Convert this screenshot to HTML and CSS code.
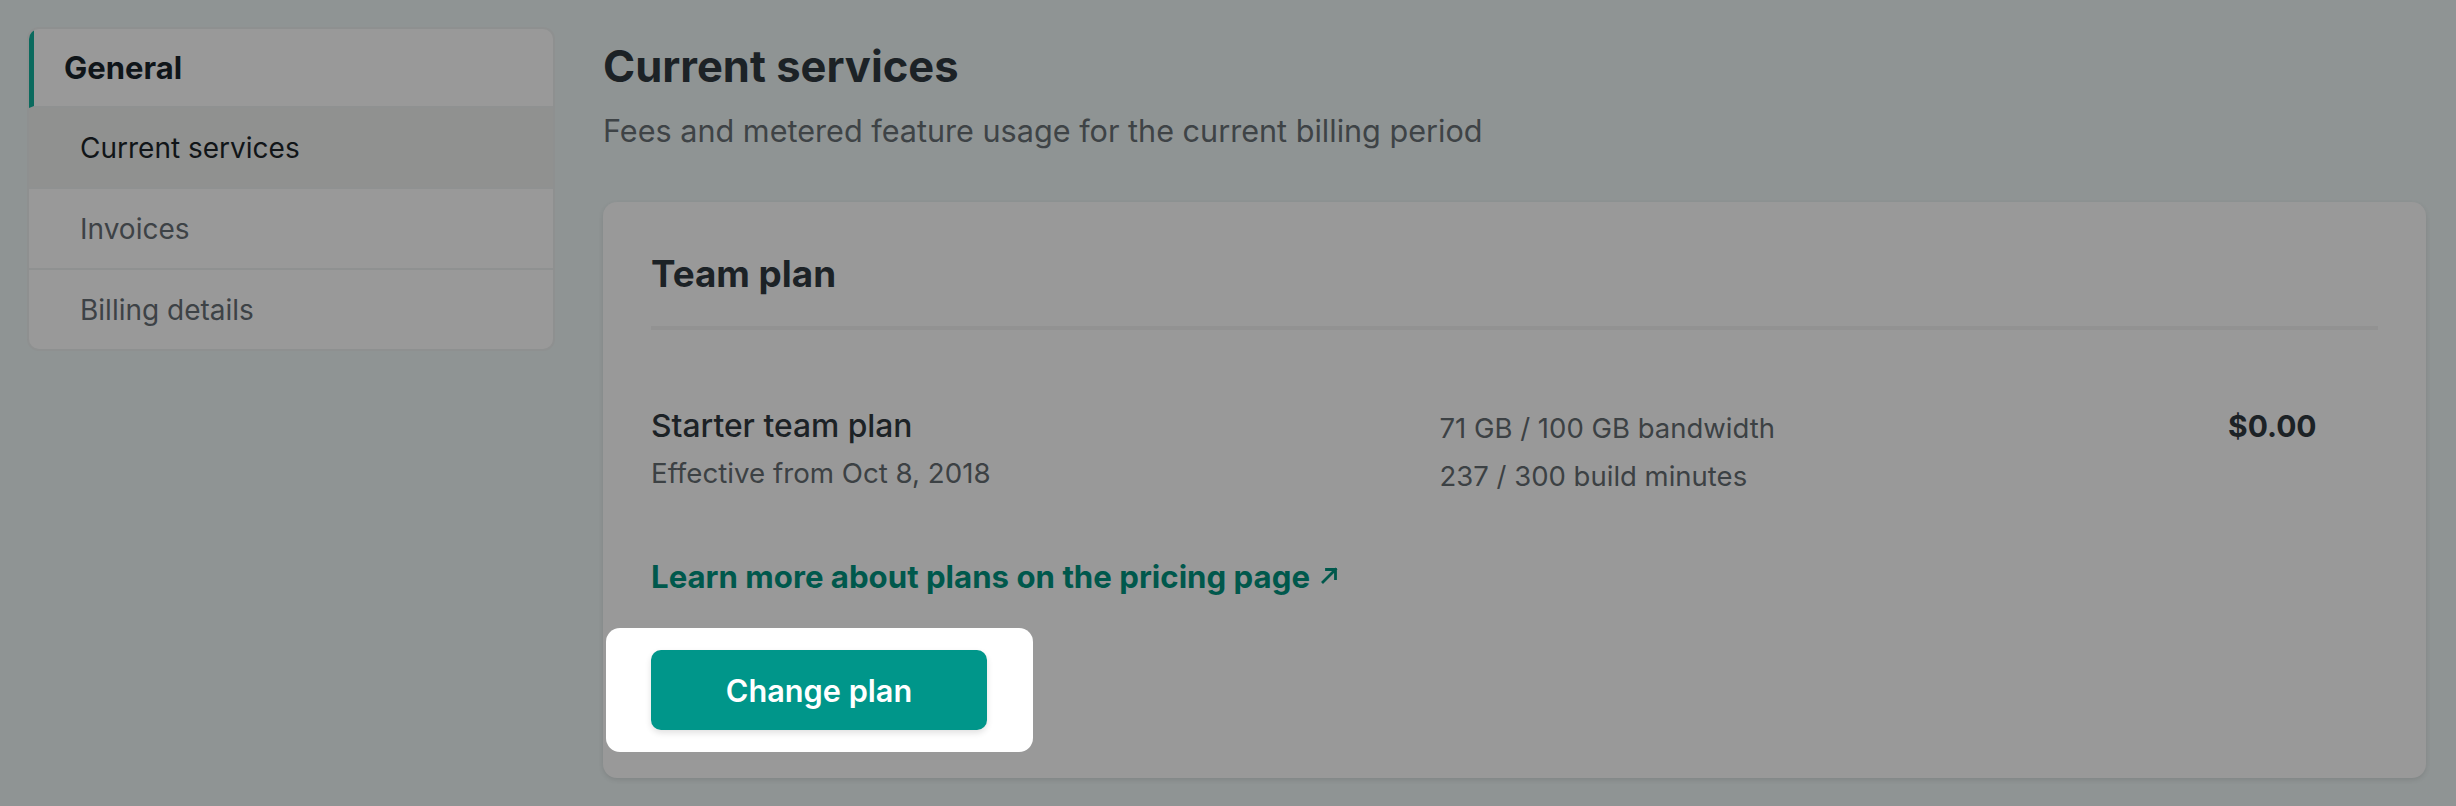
FILE: index.html
```html
<!DOCTYPE html>
<html lang="en">
<head>
<meta charset="utf-8">
<title>Current services</title>
<link rel="stylesheet" href="styles.css">
</head>
<body>
<div class="page">
  <nav class="sidebar">
    <div class="nav-head">General</div>
    <a class="nav-item active">Current services</a>
    <a class="nav-item">Invoices</a>
    <a class="nav-item last">Billing details</a>
  </nav>
  <main class="main">
    <h1 class="title">Current services</h1>
    <p class="subtitle">Fees and metered feature usage for the current billing period</p>
    <section class="card">
      <h2 class="card-title">Team plan</h2>
      <div class="divider"></div>
      <div class="plan-row">
        <div class="plan-info">
          <div class="plan-name">Starter team plan</div>
          <div class="plan-date">Effective from Oct 8, 2018</div>
        </div>
        <div class="plan-usage">
          <div>71 GB / 100 GB bandwidth</div>
          <div>237 / 300 build minutes</div>
        </div>
        <div class="plan-price">$0.00</div>
      </div>
      <a class="pricing-link">Learn more about plans on the pricing page<svg class="arrow" width="17" height="17" viewBox="0 0 17 17"><path d="M2 15 L14.5 2.5 M5.5 2.5 H14.5 V11.5" fill="none" stroke="currentColor" stroke-width="2.8" stroke-linecap="square"/></svg></a>
      <div class="highlight">
        <button class="btn">Change plan</button>
      </div>
    </section>
  </main>
</div>
</body>
</html>
```

FILE: styles.css
```css
* { box-sizing: border-box; }
html, body { margin: 0; padding: 0; }
body {
  background: #8f9494;
  font-family: Inter, "Noto Sans", "Liberation Sans", sans-serif;
  color: #1c2226;
  width: 2456px;
  height: 806px;
  overflow: hidden;
}
.page {
  display: flex;
  align-items: flex-start;
  padding: 27px 30px 0 27px;
  gap: 48px;
}
.sidebar {
  width: 528px;
  flex: 0 0 528px;
  background: #999999;
  border: 2px solid #8e9090;
  border-radius: 12px;
  overflow: hidden;
  display: flex;
  flex-direction: column;
}
.nav-head {
  height: 79px;
  display: flex;
  align-items: center;
  padding-left: 30px;
  border-left: 5px solid #0b6a5e;
  border-bottom: 2px solid #8f9191;
  font-size: 31px;
  font-weight: 700;
  color: #0f1519;
}
.nav-item {
  height: 81px;
  display: flex;
  align-items: center;
  padding-left: 51px;
  border-bottom: 2px solid #8f9191;
  font-size: 28px;
  color: #3d4246;
}
.nav-item.active {
  background: #909190;
  color: #111518;
}
.nav-item.last { border-bottom: 0; height: 79px; }
.main {
  flex: 1;
  min-width: 0;
}
.title {
  margin: 12px 0 0;
  font-size: 43.5px;
  line-height: 54px;
  font-weight: 700;
  color: #1c2226;
}
.subtitle {
  margin: 17px 0 0;
  font-size: 30.6px;
  line-height: 42px;
  color: #3e4346;
}
.card {
  margin-top: 50px;
  background: #999999;
  border-radius: 14px;
  padding: 49px 48px 48px 48px;
  box-shadow: 0 2px 5px rgba(0,0,0,0.10);
}
.card-title {
  margin: 0;
  font-size: 36.8px;
  line-height: 46px;
  font-weight: 700;
  color: #1c2226;
}
.divider {
  height: 4px;
  background: #929292;
  margin-top: 29px;
}
.plan-row {
  display: grid;
  grid-template-columns: 1fr 1fr 150px;
  column-gap: 2px;
  margin-top: 74px;
}
.plan-name {
  font-size: 31.8px;
  line-height: 44px;
  font-weight: 500;
  color: #1c2226;
}
.plan-date {
  margin-top: 4px;
  font-size: 27.7px;
  line-height: 42px;
  color: #3c4144;
}
.plan-usage {
  font-size: 27.5px;
  line-height: 48px;
  color: #3c4144;
}
.plan-price {
  font-size: 30px;
  line-height: 44px;
  font-weight: 700;
  color: #1c2226;
}
.pricing-link {
  display: inline-flex;
  align-items: center;
  margin-top: 56px;
  font-size: 31.2px;
  line-height: 42px;
  font-weight: 700;
  color: #00584c;
}
.arrow { margin-left: 11px; margin-top: -4px; }
.highlight {
  display: block;
  width: max-content;
  background: #ffffff;
  border-radius: 14px;
  padding: 22px 46px 22px 45px;
  margin: 30px 0 -22px -45px;
}
.btn {
  display: flex;
  align-items: center;
  justify-content: center;
  width: 336px;
  height: 80px;
  border: 0;
  border-radius: 10px;
  background: #00968a;
  color: #ffffff;
  font-family: Inter, "Noto Sans", "Liberation Sans", sans-serif;
  font-size: 30.7px;
  font-weight: 600;
  box-shadow: 0 3px 6px rgba(0,0,0,0.12);
}
```
